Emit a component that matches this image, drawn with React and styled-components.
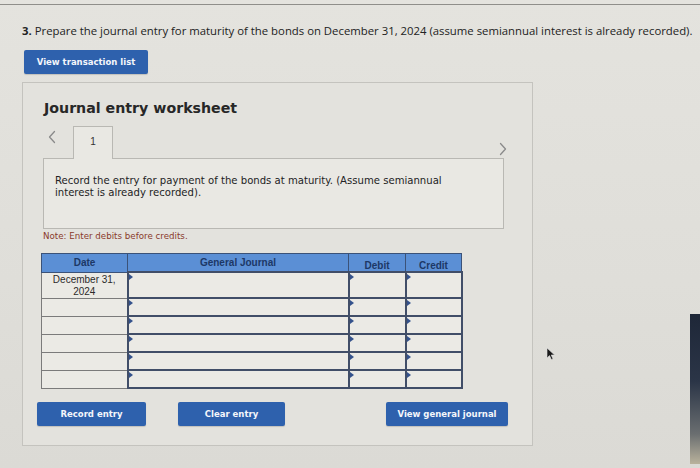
import React from 'react';
import styled, { createGlobalStyle } from 'styled-components';

const Global = createGlobalStyle`
  html, body { margin: 0; padding: 0; }
  body {
    background: #dedcd7;
    width: 700px;
    height: 468px;
    overflow: hidden;
  }
`;

const Page = styled.div`
  position: relative;
  width: 700px;
  height: 468px;
  box-sizing: border-box;
  padding: 4px 0 0 22px;
  background: linear-gradient(180deg, #e4e3de 0%, #dfded9 60%, #dbdad5 100%);
`;

const TopRule = styled.div`
  margin-left: -22px;
  width: 700px;
  border-top: 1px solid #8f8e8a;
`;

const Question = styled.p`
  margin: 19px 0 0 0;
  font-family: "Open Sans", "Liberation Sans", sans-serif;
  font-size: 11.35px;
  line-height: 14px;
  color: #222;
  white-space: nowrap;
  b { font-weight: 700; }
`;

const BlueButton = styled.button`
  display: inline-flex;
  align-items: center;
  justify-content: center;
  box-sizing: border-box;
  width: ${p => p.$w}px;
  height: 24px;
  padding: 0;
  border: none;
  border-radius: 2px;
  background: #2e61ad;
  color: #f4f6fb;
  font-family: "DejaVu Sans", Verdana, sans-serif;
  font-weight: 700;
  font-size: 8.5px;
  box-shadow: 0 1px 1px rgba(0, 0, 0, 0.15);
  cursor: pointer;
`;

const TopButtonWrap = styled.div`
  margin: 12px 0 0 2px;
`;

const Panel = styled.section`
  box-sizing: border-box;
  width: 511px;
  height: 364px;
  margin-top: 8px;
  padding: 0 0 0 20px;
  background: #e3e2dd;
  border: 1px solid #c4c3be;
`;

const Title = styled.h2`
  margin: 17px 0 0 1px;
  font-family: "DejaVu Sans", Verdana, sans-serif;
  font-weight: 700;
  font-size: 14.2px;
  line-height: 17px;
  color: #272727;
`;

const TabRow = styled.div`
  display: flex;
  align-items: flex-end;
  width: 461px;
  height: 32px;
  margin-top: 9px;
`;

const Arrow = styled.span`
  display: flex;
  align-items: center;
  justify-content: center;
  width: 14px;
  height: 14px;
  color: #8a8a8a;
  align-self: ${p => (p.$right ? 'center' : 'flex-start')};
  margin: ${p => (p.$right ? '14px -6px 0 auto' : '4px 0 0 2px')};
`;

const Tab = styled.div`
  position: relative;
  z-index: 1;
  box-sizing: border-box;
  width: 40px;
  height: 33px;
  margin: 0 0 -1px 14px;
  padding-top: 9px;
  text-align: center;
  background: #e9e8e3;
  border: 1px solid #b9b8b3;
  border-bottom: none;
  font-family: "Liberation Sans", Arial, sans-serif;
  font-size: 10px;
  color: #333;
`;

const Prompt = styled.div`
  box-sizing: border-box;
  width: 461px;
  height: 71px;
  padding: 16px 11px 0 11px;
  background: #e9e8e3;
  border: 1px solid #b9b8b3;
  font-family: "DejaVu Sans", Verdana, sans-serif;
  font-size: 10.1px;
  line-height: 11.5px;
  color: #232323;
`;

const Note = styled.p`
  margin: 2px 0 0 0;
  font-family: "DejaVu Sans", Verdana, sans-serif;
  font-size: 8.7px;
  line-height: 11px;
  color: #8a3a2b;
`;

const Table = styled.table`
  margin: 11px 0 0 -2px;
  width: 420px;
  border-collapse: collapse;
  table-layout: fixed;
  font-family: "Liberation Sans", Arial, sans-serif;
  font-size: 10px;
`;

const Th = styled.th`
  height: 17px;
  padding: 0;
  background: #5b8fd5;
  border: 1px solid #3b5278;
  color: #1d3866;
  font-weight: 700;
  font-size: 10px;
  text-align: center;
  vertical-align: ${p => (p.$low ? 'bottom' : 'middle')};
`;

const Row = styled.tr`
  height: ${p => p.$h}px;
`;

const DateCell = styled.td`
  padding: 0;
  background: #ebeae5;
  border: 1px solid #7b7b7b;
  text-align: center;
  vertical-align: top;
  color: #2b2b2b;
  line-height: 12px;
  padding-top: 1px;
`;

const InputCell = styled.td`
  position: relative;
  padding: 0;
  background: #ebeae5;
  border: 2px solid #414e68;
  &::before {
    content: "";
    position: absolute;
    top: 1px;
    left: 0;
    border-top: 3px solid transparent;
    border-bottom: 3px solid transparent;
    border-left: 4px solid #34528c;
  }
`;

const ButtonRow = styled.div`
  display: flex;
  align-items: flex-start;
  width: 471px;
  margin: 13px 0 0 -6px;
`;

const Spacer = styled.div`
  width: ${p => p.$w}px;
  flex: none;
`;

const Cursor = styled.svg`
  position: absolute;
  left: 546px;
  top: 347px;
`;

const EdgeShadow = styled.div`
  position: absolute;
  right: 0;
  top: 314px;
  width: 10px;
  height: 150px;
  background: linear-gradient(180deg, #1e2738 0%, #2b3547 45%, #6a6e70 80%, #b9b29c 100%);
`;

const ChevronLeft = () => (
  <svg width="10" height="14" viewBox="0 0 10 14" fill="none">
    <path d="M7.5 1.5 L2.5 7 L7.5 12.5" stroke="currentColor" strokeWidth="1.3" strokeLinecap="round" strokeLinejoin="round" />
  </svg>
);

const ChevronRight = () => (
  <svg width="10" height="14" viewBox="0 0 10 14" fill="none">
    <path d="M2.5 1.5 L7.5 7 L2.5 12.5" stroke="currentColor" strokeWidth="1.3" strokeLinecap="round" strokeLinejoin="round" />
  </svg>
);

const rows = [
  { h: 24, date: ['December 31,', '2024'] },
  { h: 18 },
  { h: 18 },
  { h: 18 },
  { h: 18 },
  { h: 18 },
];

export default function App() {
  return (
    <>
      <Global />
      <Page>
        <TopRule />
        <Question>
          <b>3.</b> Prepare the journal entry for maturity of the bonds on December 31, 2024 (assume semiannual interest is already recorded).
        </Question>
        <TopButtonWrap>
          <BlueButton $w={124}>View transaction list</BlueButton>
        </TopButtonWrap>
        <Panel>
          <Title>Journal entry worksheet</Title>
          <TabRow>
            <Arrow><ChevronLeft /></Arrow>
            <Tab>1</Tab>
            <Arrow $right><ChevronRight /></Arrow>
          </TabRow>
          <Prompt>
            Record the entry for payment of the bonds at maturity. (Assume semiannual
            <br />
            interest is already recorded).
          </Prompt>
          <Note>Note: Enter debits before credits.</Note>
          <Table>
            <colgroup>
              <col style={{ width: 86 }} />
              <col style={{ width: 221 }} />
              <col style={{ width: 57 }} />
              <col style={{ width: 56 }} />
            </colgroup>
            <thead>
              <tr>
                <Th>Date</Th>
                <Th>General Journal</Th>
                <Th $low>Debit</Th>
                <Th $low>Credit</Th>
              </tr>
            </thead>
            <tbody>
              {rows.map((r, i) => (
                <Row key={i} $h={r.h}>
                  <DateCell>
                    {r.date && (
                      <>
                        {r.date[0]}
                        <br />
                        {r.date[1]}
                      </>
                    )}
                  </DateCell>
                  <InputCell />
                  <InputCell />
                  <InputCell />
                </Row>
              ))}
            </tbody>
          </Table>
          <ButtonRow>
            <BlueButton $w={109}>Record entry</BlueButton>
            <Spacer $w={32} />
            <BlueButton $w={107}>Clear entry</BlueButton>
            <Spacer $w={101} />
            <BlueButton $w={122}>View general journal</BlueButton>
          </ButtonRow>
        </Panel>
        <Cursor width="10" height="14" viewBox="0 0 10 14">
          <path d="M1 1 L1 11 L3.5 8.6 L5.4 12.6 L7 11.9 L5.2 8 L8.6 8 Z" fill="#1a1a1a" stroke="#e0e0e0" strokeWidth="0.6" />
        </Cursor>
        <EdgeShadow />
      </Page>
    </>
  );
}
